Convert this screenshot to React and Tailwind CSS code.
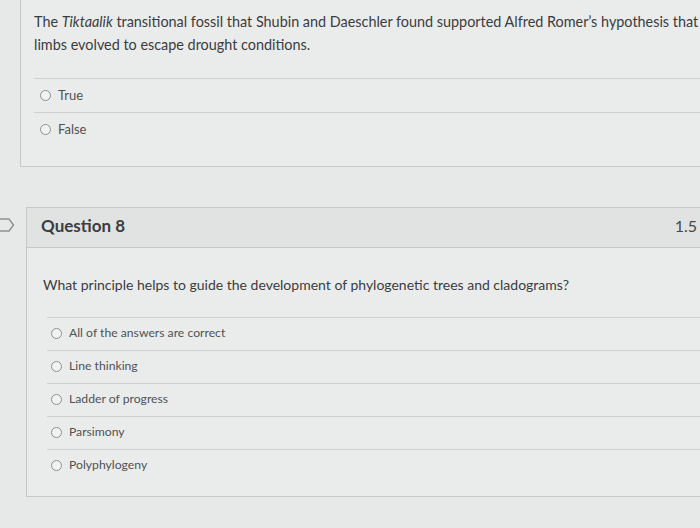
import React from "react";

function Radio({ label, tall }) {
  return (
    <div className={`flex items-center border-t border-[#cfd1d1] ${tall ? "h-[34px] pl-[6px]" : "h-[33px] pl-[4px] pb-[2px]"}`}>
      <span className="w-[11px] h-[11px] rounded-full border-[1.5px] border-[#8d8f91] bg-[#f1f2f2] shrink-0" />
      <span className={`${tall ? "ml-[7px] text-[13px]" : "ml-[7px] text-[12.2px]"} text-[#505254] leading-none`}>{label}</span>
    </div>
  );
}

export default function App() {
  return (
    <div className="w-[700px] h-[528px] overflow-hidden bg-[#e7e9e9] font-['Lato','Open_Sans',sans-serif]">
      <div className="ml-[20px] w-[760px] border-l border-b border-[#c6c8c8] bg-[#eaecec] pt-[10px] pb-[20px]">
        <p className="pl-[13px] text-[14.4px] leading-[23px] text-[#3a3c3f] whitespace-nowrap">
          The <i>Tiktaalik</i> transitional fossil that Shubin and Daeschler found supported Alfred Romer’s hypothesis that
          <br />
          limbs evolved to escape drought conditions.
        </p>
        <div className="mt-[22px] ml-[13px]">
          <Radio label="True" tall />
          <Radio label="False" tall />
        </div>
      </div>

      <div className="flex items-start mt-[40px]">
        <div className="w-[26px] shrink-0 pt-[11px]">
          <svg width="16" height="14" viewBox="0 0 16 14" className="block">
            <path d="M-2 1 H9 L13.5 7 L9 13 H-2" fill="none" stroke="#8e9091" strokeWidth="1.4" strokeLinejoin="round" />
          </svg>
        </div>
        <div className="w-[690px] shrink-0 border-t border-l border-b border-[#c6c8c8] bg-[#eaecec]">
          <div className="h-[40px] flex items-center justify-between bg-[#e1e3e3] border-b border-[#c6c8c8] pl-[14px] pr-[19px] pb-[3px]">
            <span className="text-[17px] font-bold text-[#3b3d40]">Question 8</span>
            <span className="text-[16px] text-[#45474a]">1.5</span>
          </div>
          <div className="pt-[26px] pb-[14px]">
            <p className="pl-[16px] text-[14px] leading-[22px] text-[#3a3c3f] whitespace-nowrap">
              What principle helps to guide the development of phylogenetic trees and cladograms?
            </p>
            <div className="mt-[21px] ml-[20px]">
              <Radio label="All of the answers are correct" />
              <Radio label="Line thinking" />
              <Radio label="Ladder of progress" />
              <Radio label="Parsimony" />
              <Radio label="Polyphylogeny" />
            </div>
          </div>
        </div>
      </div>
    </div>
  );
}
